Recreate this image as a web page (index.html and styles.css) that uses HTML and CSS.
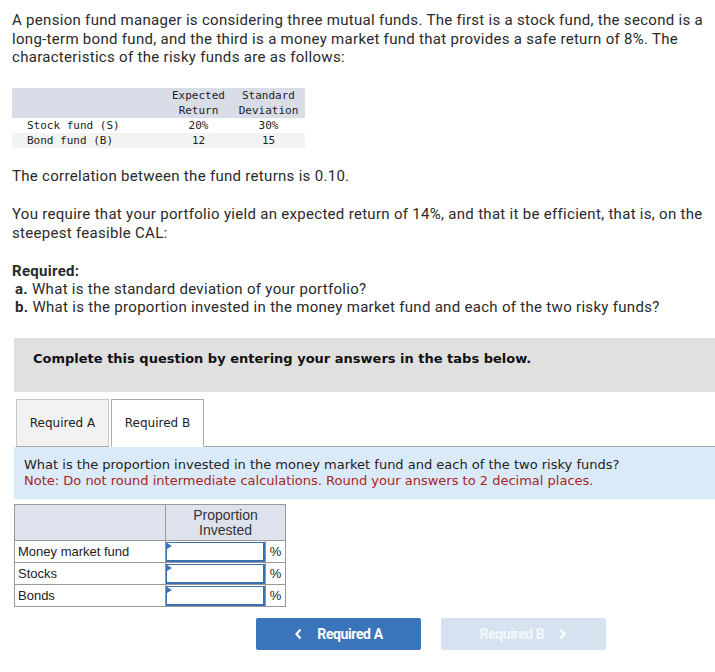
FILE: index.html
```html
<!DOCTYPE html>
<html>
<head>
<meta charset="utf-8">
<link rel="stylesheet" href="styles.css">
</head>
<body>
<div class="page">
  <p class="intro">A pension fund manager is considering three mutual funds. The first is a stock fund, the second is a long-term bond fund, and the third is a money market fund that provides a safe return of 8%. The characteristics of the risky funds are as follows:</p>

  <table class="data">
    <thead>
      <tr><th class="lbl"></th><th>Expected<br>Return</th><th>Standard<br>Deviation</th></tr>
    </thead>
    <tbody>
      <tr><td class="lbl">Stock fund (S)</td><td>20%</td><td>30%</td></tr>
      <tr class="alt"><td class="lbl">Bond fund (B)</td><td>12</td><td>15</td></tr>
    </tbody>
  </table>

  <p class="text corr">The correlation between the fund returns is 0.10.</p>
  <p class="text req">You require that your portfolio yield an expected return of 14%, and that it be efficient, that is, on the steepest feasible CAL:</p>

  <div class="required">
    <div class="req-title">Required:</div>
    <div class="req-item"><b>a.</b> What is the standard deviation of your portfolio?</div>
    <div class="req-item"><b>b.</b> What is the proportion invested in the money market fund and each of the two risky funds?</div>
  </div>

  <div class="complete">Complete this question by entering your answers in the tabs below.</div>

  <div class="tabs">
    <div class="tab">Required A</div>
    <div class="tab active">Required B</div>
    <div class="tab-rest"></div>
  </div>

  <div class="question">
    <div>What is the proportion invested in the money market fund and each of the two risky funds?</div>
    <div class="note">Note: Do not round intermediate calculations. Round your answers to 2 decimal places.</div>
  </div>

  <table class="answer">
    <tr class="head"><th class="c1"></th><th colspan="2" class="c2">Proportion<br>Invested</th></tr>
    <tr><td class="c1">Money market fund</td><td class="inp"><div class="box"></div></td><td class="pct">%</td></tr>
    <tr><td class="c1">Stocks</td><td class="inp"><div class="box"></div></td><td class="pct">%</td></tr>
    <tr><td class="c1">Bonds</td><td class="inp"><div class="box"></div></td><td class="pct">%</td></tr>
  </table>

  <div class="nav">
    <button class="btn prev"><svg width="9" height="12" viewBox="0 0 9 12"><path d="M6.5 1.5 L2.5 6 L6.5 10.5" fill="none" stroke="#fff" stroke-width="2.2"/></svg><span>Required A</span></button>
    <button class="btn next"><span>Required B</span><svg width="9" height="12" viewBox="0 0 9 12"><path d="M2.5 1.5 L6.5 6 L2.5 10.5" fill="none" stroke="#fff" stroke-width="2.2"/></svg></button>
  </div>
</div>
</body>
</html>
```

FILE: styles.css
```css
* { box-sizing: border-box; }
body { margin: 0; background: #fff; }
.page { padding: 11px 0 0 0; font-family: Roboto, "Liberation Sans", sans-serif; color: #2a2a2a; }

.intro, .text {
  margin: 0 0 0 12px;
  font-size: 15px;
  line-height: 18.5px;
  letter-spacing: 0.3px;
  padding-right: 6px;
}

.data {
  margin: 21px 0 0 12px;
  border-collapse: collapse;
  font-family: "DejaVu Sans Mono", "Liberation Mono", monospace;
  font-size: 11px;
  line-height: 15px;
  color: #222;
}
.data th { font-weight: normal; background: #d9dde8; padding: 0; text-align: center; }
.data td { padding: 0; text-align: center; }
.data .lbl { text-align: left; padding-left: 15px; width: 153px; }
.data th:nth-child(2), .data td:nth-child(2) { width: 67px; }
.data th:nth-child(3), .data td:nth-child(3) { width: 73px; }
.data tr.alt td { background: #f3f3f3; }

.corr { margin-top: 19px; }
.req { margin-top: 20px; }

.required { margin: 20px 0 0 12px; font-size: 15px; line-height: 18px; letter-spacing: 0.3px; }
.req-title { font-weight: bold; }
.req-item { padding-left: 3px; }

.complete {
  margin: 22px 0 0 14px;
  background: #e0e0e0;
  height: 54px;
  padding: 13px 0 0 19px;
  font-family: "DejaVu Sans", Verdana, sans-serif;
  font-weight: bold;
  font-size: 13px;
  color: #111;
}

.tabs { display: flex; margin: 7px 0 0 16px; height: 48px; align-items: stretch; }
.tab {
  width: 93px;
  border: 1px solid #c8c8c8;
  border-bottom: 1px solid #aaa;
  background: #f2f2f2;
  font-family: "DejaVu Sans", Verdana, sans-serif;
  font-size: 12px;
  color: #222;
  padding-top: 16px;
  text-align: center;
}
.tab.active { background: #fff; border-color: #aaa; border-bottom-color: #fff; margin-left: 2px; }
.tab-rest { flex: 1; border-bottom: 1px solid #aaa; }

.question {
  margin: 0 0 0 14px;
  background: #dbeaf8;
  height: 52px;
  padding: 10px 0 0 10px;
  font-family: "DejaVu Sans", Verdana, sans-serif;
  font-size: 13px;
  line-height: 16px;
  color: #222;
}
.note { color: #a8251f; }

.answer {
  margin: 5px 0 0 14px;
  border-collapse: collapse;
  font-family: "Liberation Sans", Arial, sans-serif;
  font-size: 13px;
  color: #222;
}
.answer th, .answer td { border: 1px solid #999; padding: 0; }
.answer .head th { background: #dde2ec; height: 36px; font-weight: normal; font-size: 14px; line-height: 15px; color: #333; }
.answer .c1 { width: 151px; padding-left: 3px; text-align: left; height: 22px; }
.answer .inp { width: 100px; padding: 0; height: 22px; }
.answer .pct { width: 20px; text-align: center; }
.box {
  position: relative;
  height: 20px;
  border-style: solid;
  border-width: 1px 2px 2px 1px;
  border-color: #3a6fb0;
}
.box::before {
  content: "";
  position: absolute;
  left: 0; top: 0;
  border-left: 5px solid #3a75c0;
  border-top: 3px solid transparent;
  border-bottom: 3px solid transparent;
}

.nav { display: flex; gap: 20px; margin: 11px 0 0 256px; }
.btn {
  width: 165px; height: 32px;
  border: none; border-radius: 2px;
  font-family: Roboto, "Liberation Sans", sans-serif;
  font-weight: bold; font-size: 14px; letter-spacing: -0.4px;
  color: #fff;
  display: flex; align-items: center; justify-content: center; gap: 14px;
  padding: 0;
}
.btn.prev { background: #3a74ba; }
.btn.next { background: #d7e2f0; color: #f4f7fb; }
```
